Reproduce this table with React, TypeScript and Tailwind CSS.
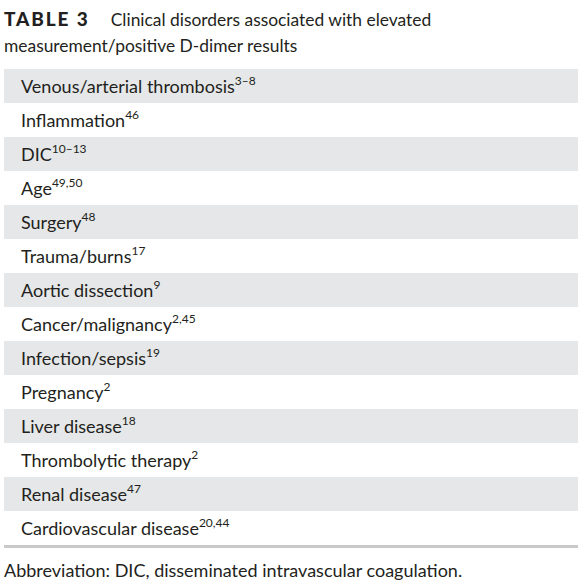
import React from "react";

const rows: [string, string][] = [
  ["Venous/arterial thrombosis", "3–8"],
  ["Inflammation", "46"],
  ["DIC", "10–13"],
  ["Age", "49,50"],
  ["Surgery", "48"],
  ["Trauma/burns", "17"],
  ["Aortic dissection", "9"],
  ["Cancer/malignancy", "2,45"],
  ["Infection/sepsis", "19"],
  ["Pregnancy", "2"],
  ["Liver disease", "18"],
  ["Thrombolytic therapy", "2"],
  ["Renal disease", "47"],
  ["Cardiovascular disease", "20,44"],
];

export default function App() {
  return (
    <div
      className="w-[580px] h-[588px] bg-white text-[#231f20] overflow-hidden"
      style={{ fontFamily: "Lato, 'Noto Sans', sans-serif" }}
    >
      <div className="pl-[4px] pt-[6px] text-[17.4px] leading-[26px]">
        <span className="font-black text-[19px] tracking-[0.1em] mr-[21px]">TABLE 3</span>
        <span>Clinical disorders associated with elevated</span>
        <br />
        <span>measurement/positive D-dimer results</span>
      </div>
      <div className="ml-[4px] mr-[2px] mt-[10px] border-b-[3px] border-[#c9c9c9]">
        {rows.map(([t, s], i) => (
          <div
            key={i}
            className={`h-[34px] flex items-center pl-[17px] pt-[3px] text-[18px] leading-[22px] ${
              i % 2 === 0 ? "bg-[#e6e7e8]" : "bg-white"
            }`}
          >
            <span>
              {t}
              <span className="text-[12px] relative top-[-8px]">{s}</span>
            </span>
          </div>
        ))}
      </div>
      <div className="pl-[4px] pt-[10px] text-[18px] leading-[24px]">
        Abbreviation: DIC, disseminated intravascular coagulation.
      </div>
    </div>
  );
}
